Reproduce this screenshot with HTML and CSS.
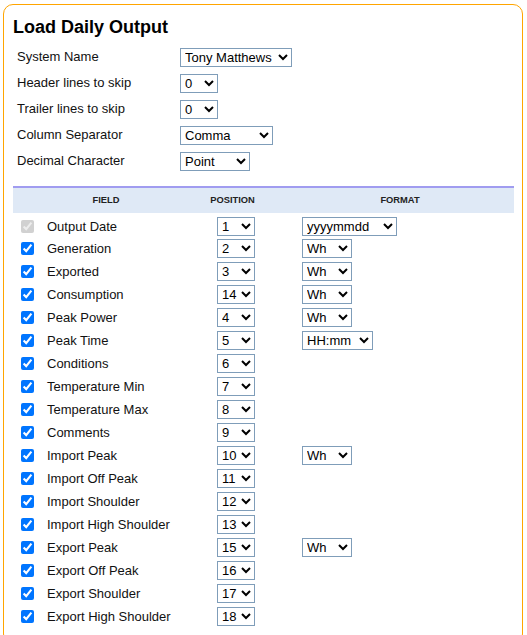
FILE: index.html
```html
<!DOCTYPE html>
<html lang="en">
<head>
    <meta charset="UTF-8">
    <meta name="viewport" content="width=device-width, initial-scale=1.0">
    <title>Load Daily Output</title>
    <link rel="stylesheet" href="styles.css">
</head>
<body>
    <div class="panel">
        <h2>Load Daily Output</h2>

        <table class="settings">
            <tr>
                <td class="lbl">System Name</td>
                <td><select class="w-system"><option>Tony Matthews</option></select></td>
            </tr>
            <tr>
                <td class="lbl">Header lines to skip</td>
                <td><select class="w-num"><option>0</option></select></td>
            </tr>
            <tr>
                <td class="lbl">Trailer lines to skip</td>
                <td><select class="w-num"><option>0</option></select></td>
            </tr>
            <tr>
                <td class="lbl">Column Separator</td>
                <td><select class="w-sep"><option>Comma</option></select></td>
            </tr>
            <tr>
                <td class="lbl">Decimal Character</td>
                <td><select class="w-dec"><option>Point</option></select></td>
            </tr>
        </table>

        <table class="fields">
            <colgroup>
                <col class="c-check">
                <col class="c-field">
                <col class="c-pos">
                <col>
            </colgroup>
            <thead>
                <tr>
                    <th></th>
                    <th>FIELD</th>
                    <th>POSITION</th>
                    <th>FORMAT</th>
                </tr>
            </thead>
            <tbody>
                <tr>
                    <td class="chk"><input type="checkbox" checked disabled></td>
                    <td class="name">Output Date</td>
                    <td class="pos"><select class="w-num"><option>1</option></select></td>
                    <td class="fmt"><select class="w-date"><option>yyyymmdd</option></select></td>
                </tr>
                <tr>
                    <td class="chk"><input type="checkbox" checked></td>
                    <td class="name">Generation</td>
                    <td class="pos"><select class="w-num"><option>2</option></select></td>
                    <td class="fmt"><select class="w-unit"><option>Wh</option></select></td>
                </tr>
                <tr>
                    <td class="chk"><input type="checkbox" checked></td>
                    <td class="name">Exported</td>
                    <td class="pos"><select class="w-num"><option>3</option></select></td>
                    <td class="fmt"><select class="w-unit"><option>Wh</option></select></td>
                </tr>
                <tr>
                    <td class="chk"><input type="checkbox" checked></td>
                    <td class="name">Consumption</td>
                    <td class="pos"><select class="w-num"><option>14</option></select></td>
                    <td class="fmt"><select class="w-unit"><option>Wh</option></select></td>
                </tr>
                <tr>
                    <td class="chk"><input type="checkbox" checked></td>
                    <td class="name">Peak Power</td>
                    <td class="pos"><select class="w-num"><option>4</option></select></td>
                    <td class="fmt"><select class="w-unit"><option>Wh</option></select></td>
                </tr>
                <tr>
                    <td class="chk"><input type="checkbox" checked></td>
                    <td class="name">Peak Time</td>
                    <td class="pos"><select class="w-num"><option>5</option></select></td>
                    <td class="fmt"><select class="w-time"><option>HH:mm</option></select></td>
                </tr>
                <tr>
                    <td class="chk"><input type="checkbox" checked></td>
                    <td class="name">Conditions</td>
                    <td class="pos"><select class="w-num"><option>6</option></select></td>
                    <td class="fmt"></td>
                </tr>
                <tr>
                    <td class="chk"><input type="checkbox" checked></td>
                    <td class="name">Temperature Min</td>
                    <td class="pos"><select class="w-num"><option>7</option></select></td>
                    <td class="fmt"></td>
                </tr>
                <tr>
                    <td class="chk"><input type="checkbox" checked></td>
                    <td class="name">Temperature Max</td>
                    <td class="pos"><select class="w-num"><option>8</option></select></td>
                    <td class="fmt"></td>
                </tr>
                <tr>
                    <td class="chk"><input type="checkbox" checked></td>
                    <td class="name">Comments</td>
                    <td class="pos"><select class="w-num"><option>9</option></select></td>
                    <td class="fmt"></td>
                </tr>
                <tr>
                    <td class="chk"><input type="checkbox" checked></td>
                    <td class="name">Import Peak</td>
                    <td class="pos"><select class="w-num"><option>10</option></select></td>
                    <td class="fmt"><select class="w-unit"><option>Wh</option></select></td>
                </tr>
                <tr>
                    <td class="chk"><input type="checkbox" checked></td>
                    <td class="name">Import Off Peak</td>
                    <td class="pos"><select class="w-num"><option>11</option></select></td>
                    <td class="fmt"></td>
                </tr>
                <tr>
                    <td class="chk"><input type="checkbox" checked></td>
                    <td class="name">Import Shoulder</td>
                    <td class="pos"><select class="w-num"><option>12</option></select></td>
                    <td class="fmt"></td>
                </tr>
                <tr>
                    <td class="chk"><input type="checkbox" checked></td>
                    <td class="name">Import High Shoulder</td>
                    <td class="pos"><select class="w-num"><option>13</option></select></td>
                    <td class="fmt"></td>
                </tr>
                <tr>
                    <td class="chk"><input type="checkbox" checked></td>
                    <td class="name">Export Peak</td>
                    <td class="pos"><select class="w-num"><option>15</option></select></td>
                    <td class="fmt"><select class="w-unit"><option>Wh</option></select></td>
                </tr>
                <tr>
                    <td class="chk"><input type="checkbox" checked></td>
                    <td class="name">Export Off Peak</td>
                    <td class="pos"><select class="w-num"><option>16</option></select></td>
                    <td class="fmt"></td>
                </tr>
                <tr>
                    <td class="chk"><input type="checkbox" checked></td>
                    <td class="name">Export Shoulder</td>
                    <td class="pos"><select class="w-num"><option>17</option></select></td>
                    <td class="fmt"></td>
                </tr>
                <tr>
                    <td class="chk"><input type="checkbox" checked></td>
                    <td class="name">Export High Shoulder</td>
                    <td class="pos"><select class="w-num"><option>18</option></select></td>
                    <td class="fmt"></td>
                </tr>
            </tbody>
        </table>
    </div>
</body>
</html>
```

FILE: styles.css
```css
* {
    box-sizing: border-box;
}

body {
    margin: 0;
    background: #fff;
    font-family: "Liberation Sans", Arial, sans-serif;
    font-size: 13px;
    color: #111;
}

.panel {
    width: 520px;
    min-height: 640px;
    margin: 4px 0 0 3px;
    padding: 12px 7px 0 9px;
    border: 1px solid #ffa500;
    border-radius: 10px;
}

h2 {
    margin: 0;
    font-size: 18px;
    line-height: 21px;
    font-weight: bold;
    color: #000;
}

select {
    height: 19px;
    padding: 0;
    font-family: "Liberation Sans", Arial, sans-serif;
    font-size: 13px;
    color: #000;
    background-color: #fff;
    border: 1px solid #7f9db9;
    border-radius: 0;
}

/* top settings */
.settings {
    border-collapse: collapse;
    margin-top: 6px;
}

.settings td {
    height: 26px;
    padding: 0;
    vertical-align: middle;
}

.settings .lbl {
    width: 167px;
    padding-left: 4px;
    padding-bottom: 2px;
}

.w-system { width: 112px; }
.w-num    { width: 38px; }
.w-sep    { width: 93px; }
.w-dec    { width: 70px; }
.w-date   { width: 95px; }
.w-unit   { width: 50px; }
.w-time   { width: 71px; }

/* field mapping table */
.fields {
    width: 501px;
    margin-top: 12px;
    border-collapse: collapse;
    table-layout: fixed;
}

.c-check { width: 27px; }
.c-field { width: 132px; }
.c-pos   { width: 121px; }

.fields th {
    height: 27px;
    padding: 0 0 1px 0;
    background: #dfe9f6;
    border-top: 2px solid #a09cf0;
    border-bottom: 2px solid #fff;
    font-size: 9.33px;
    font-weight: bold;
    color: #222;
    text-align: center;
}

.fields th:last-child {
    padding-right: 7px;
}

.fields td {
    height: 23px;
    padding: 0;
    vertical-align: middle;
}

.fields .chk {
    padding-left: 8px;
}

.fields .chk input {
    display: block;
    width: 13px;
    height: 13px;
    margin: 0;
}

.fields .name {
    padding-left: 7px;
    white-space: nowrap;
}

.fields .pos {
    padding-left: 45px;
}

.fields .fmt {
    padding-left: 9px;
}
```
